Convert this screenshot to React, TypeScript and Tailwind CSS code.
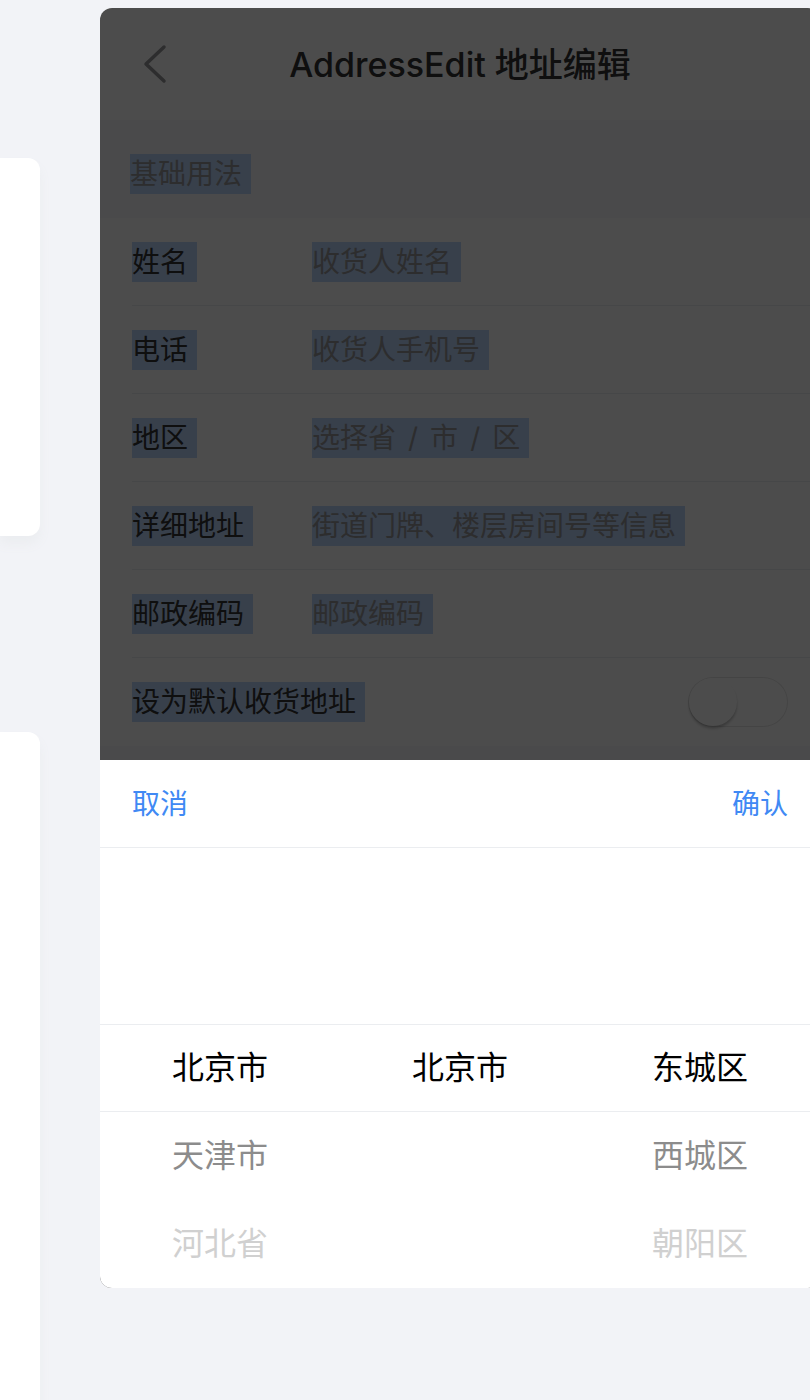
const fields = [
  { label: "姓名", placeholder: "收货人姓名" },
  { label: "电话", placeholder: "收货人手机号" },
  { label: "地区", placeholder: "region" },
  { label: "详细地址", placeholder: "街道门牌、楼层房间号等信息" },
  { label: "邮政编码", placeholder: "邮政编码" },
]

const columns = [
  ["北京市", "天津市", "河北省"],
  ["北京市"],
  ["东城区", "西城区", "朝阳区"],
]

const itemColors = ["text-black", "text-[#8c8c8c]", "text-[#d0d0d0]"]

function Sel({ children }: { children: React.ReactNode }) {
  return <span className="block h-[40px] leading-[40px] pr-[9px] bg-[#bcd6fc]">{children}</span>
}

function BackArrow() {
  return (
    <svg width="26" height="40" viewBox="0 0 26 40" fill="none">
      <polyline
        points="22,3 4,20 22,37"
        stroke="#969799"
        strokeWidth="3.5"
        strokeLinecap="round"
        strokeLinejoin="round"
      />
    </svg>
  )
}

function Placeholder({ text }: { text: string }) {
  if (text !== "region") return <>{text}</>
  return (
    <>
      选择省<span className="px-[12px]">/</span>市<span className="px-[12px]">/</span>区
    </>
  )
}

export default function App() {
  return (
    <div className="h-[1400px] overflow-hidden bg-[#f2f3f7] flex gap-[60px] font-[Inter,'Noto_Sans_CJK_SC',sans-serif]">
      <div className="w-[40px] shrink-0 flex flex-col">
        <div className="shrink-0 mt-[158px] h-[378px] bg-white rounded-r-xl shadow-[0_8px_12px_#ebedf0]" />
        <div className="shrink-0 mt-[196px] h-[700px] bg-white rounded-r-xl shadow-[0_8px_12px_#ebedf0]" />
      </div>

      <div className="relative mt-2 w-[720px] h-[1280px] shrink-0 rounded-xl overflow-hidden bg-[#f7f8fa]">
        <div className="h-[112px] bg-white flex items-center px-[42px]">
          <div className="w-[30px] flex">
            <BackArrow />
          </div>
          <div className="flex-1 text-center text-[34px] font-medium text-[#323233]">
            AddressEdit 地址编辑
          </div>
          <div className="w-[30px]" />
        </div>

        <div className="flex pt-[34px] pb-[24px] pl-[30px] text-[28px] text-[#969799]">
          <Sel>基础用法</Sel>
        </div>

        <div className="bg-white">
          {fields.map((f) => (
            <div key={f.label} className="pl-[32px]">
              <div className="h-[88px] pr-[32px] flex items-center border-b border-[#ebedf0] text-[28px]">
                <div className="w-[180px] flex text-[#323233]">
                  <Sel>{f.label}</Sel>
                </div>
                <div className="flex text-[#969799]">
                  <Sel>
                    <Placeholder text={f.placeholder} />
                  </Sel>
                </div>
              </div>
            </div>
          ))}
          <div className="h-[88px] px-[32px] flex items-center justify-between text-[28px] text-[#323233]">
            <Sel>设为默认收货地址</Sel>
            <div className="w-[100px] h-[50px] rounded-full border border-black/10 bg-white">
              <div className="w-[48px] h-[48px] rounded-full bg-white shadow-[0_3px_3px_rgba(0,0,0,0.15),0_2px_2px_rgba(0,0,0,0.1)]" />
            </div>
          </div>
        </div>

        <div className="absolute inset-0 bg-black/70" />

        <div className="absolute left-0 right-0 bottom-0 h-[528px] bg-white flex flex-col">
          <div className="h-[88px] shrink-0 px-[32px] flex items-center justify-between border-b border-[#ebedf0] text-[28px] text-[#4089f4]">
            <span>取消</span>
            <span>确认</span>
          </div>
          <div className="flex-1 flex">
            {columns.map((col, ci) => (
              <div key={ci} className="flex-1 flex flex-col pt-[176px]">
                {col.map((item, i) => (
                  <div
                    key={item + i}
                    className={`h-[88px] flex items-center justify-center text-[32px] ${itemColors[i]} ${
                      i === 0 ? "border-y border-[#ebedf0]" : ""
                    }`}
                  >
                    {item}
                  </div>
                ))}
              </div>
            ))}
          </div>
        </div>
      </div>
    </div>
  )
}
